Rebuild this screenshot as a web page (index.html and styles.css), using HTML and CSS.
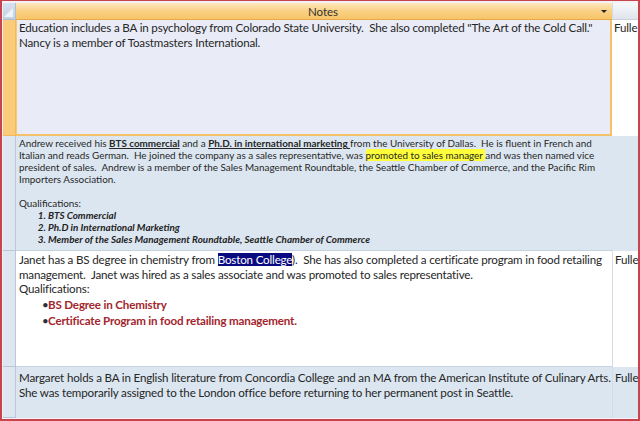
FILE: index.html
```html
<!DOCTYPE html>
<html>
<head>
<meta charset="utf-8">
<link rel="stylesheet" href="styles.css">
</head>
<body>
<div class="frame">
  <div class="sheet">
    <div class="corner">
      <svg width="9" height="9" viewBox="0 0 9 9"><polygon points="9,0 9,9 0,9" fill="#eef3f9"/></svg>
    </div>
    <div class="hnotes"><span class="htitle">Notes</span><span class="arrow"></span></div>
    <div class="hnext"></div>

    <div class="sel sel-on"></div>
    <div class="notes n1 big">Education includes a BA in psychology from Colorado State University.&nbsp; She also completed "The Art of the Cold Call."<br>Nancy is a member of Toastmasters International.</div>
    <div class="next white big">Fulle</div>

    <div class="sel"></div>
    <div class="notes n2 small">
      <div>Andrew received his <b class="u">BTS commercial</b> and a <b class="u">Ph.D. in international marketing </b>from the University of Dallas.&nbsp; He is fluent in French and</div>
      <div>Italian and reads German.&nbsp; He joined the company as a sales representative, was <span class="hl">promoted to sales manager </span>and was then named vice</div>
      <div>president of sales.&nbsp; Andrew is a member of the Sales Management Roundtable, the Seattle Chamber of Commerce, and the Pacific Rim</div>
      <div>Importers Association.</div>
      <div class="gap"></div>
      <div>Qualifications:</div>
      <ol class="olist">
        <li>BTS Commercial</li>
        <li>Ph.D in International Marketing</li>
        <li>Member of the Sales Management Roundtable, Seattle Chamber of Commerce</li>
      </ol>
    </div>
    <div class="next blue"></div>

    <div class="sel"></div>
    <div class="notes n3 big">
      <div>Janet has a BS degree in chemistry from <span class="selx">Boston College</span>).&nbsp; She has also completed a certificate program in food retailing</div>
      <div>management.&nbsp; Janet was hired as a sales associate and was promoted to sales representative.</div>
      <div>Qualifications:</div>
      <ul class="ulist">
        <li>BS Degree in Chemistry</li>
        <li>Certificate Program in food retailing management.</li>
      </ul>
    </div>
    <div class="next white big sep">Fulle</div>

    <div class="sel"></div>
    <div class="notes n4 big">
      <div>Margaret holds a BA in English literature from Concordia College and an MA from the American Institute of Culinary Arts.</div>
      <div>She was temporarily assigned to the London office before returning to her permanent post in Seattle.</div>
    </div>
    <div class="next blue big sep">Fulle</div>
  </div>
</div>
</body>
</html>
```
FILE: styles.css
```css
html, body {
  margin: 0;
  padding: 0;
  background: #ffffff;
}

.frame {
  width: 640px;
  height: 421px;
  box-sizing: border-box;
  border-left: 2px solid #c8434c;
  border-right: 2px solid #c8434c;
  border-top: 1px solid #c8434c;
  border-bottom: 2px solid #c8434c;
  padding: 2px 0 0 1px;
  background: #f3f1f3;
  overflow: hidden;
}

.sheet {
  display: grid;
  grid-template-columns: 13px 596px 26px;
  grid-template-rows: 17px 116px 115px 116px 51px;
  font-family: Lato, "Open Sans", sans-serif;
  color: #262626;
  overflow: hidden;
}

.corner {
  background: linear-gradient(#d9e2ee, #c2d0e2);
  border-right: 1px solid #aebdd2;
  border-bottom: 1px solid #aebdd2;
  box-sizing: border-box;
  display: flex;
  align-items: flex-end;
  justify-content: flex-end;
  padding: 0 2px 2px 0;
}

.hnotes {
  background: linear-gradient(#fde7bd, #f9cf80 55%, #f7c56a);
  border-bottom: 1px solid #e9a842;
  box-sizing: border-box;
  display: flex;
  align-items: center;
  justify-content: center;
  position: relative;
  font-size: 11.5px;
  color: #333333;
}

.htitle {
  margin-left: 18px;
}

.arrow {
  position: absolute;
  right: 5px;
  top: 7px;
  width: 0;
  height: 0;
  border-left: 3px solid transparent;
  border-right: 3px solid transparent;
  border-top: 3px solid #222222;
}

.hnext {
  background: linear-gradient(#f7f8fa, #dfe4eb);
  border-bottom: 1px solid #c9d1dc;
  border-left: 1px solid #d5dbe4;
}

.sel {
  background: #dde6f1;
  border-right: 1px solid #b9c7d9;
  border-bottom: 1px solid #b9c7d9;
  box-sizing: border-box;
}

.sel-on {
  background: #f9cb7a;
  border-right: 1px solid #f3b95a;
  border-bottom: 1px solid #f3b95a;
}

.notes {
  box-sizing: border-box;
  white-space: nowrap;
  overflow: hidden;
  padding-left: 3px;
}

.big {
  font-size: 11.6px;
  letter-spacing: -0.17px;
  line-height: 14.7px;
}

.small {
  font-size: 9.9px;
  line-height: 12px;
}

.n1 {
  background: #e9ecf6;
  border-left: 1px solid #f6c977;
  border-right: 2px solid #f5c06a;
  border-bottom: 2px solid #f5c06a;
  padding-top: 1px;
  padding-left: 2px;
}

.n2 {
  background: #dce6f1;
  border-bottom: 1px solid #c6d2e2;
  padding-top: 1px;
}

.n3 {
  background: #ffffff;
  border-bottom: 1px solid #c6d2e2;
  padding-top: 2px;
}

.n4 {
  background: #dce6f1;
  padding-top: 4px;
}

.next {
  box-sizing: border-box;
  white-space: nowrap;
  overflow: hidden;
  padding-left: 2px;
  padding-top: 2px;
}

.white {
  background: #ffffff;
}

.blue {
  background: #dce6f1;
}

.sep {
  border-left: 1px solid #d3dbe6;
}

.n1 + .next {
  padding-top: 1px;
}

.n4 + .next {
  padding-top: 4px;
}

.u {
  text-decoration: underline;
  font-weight: 700;
}

.hl {
  background: #ffff3a;
}

.selx {
  background: #0a0a80;
  color: #ffffff;
}

.gap {
  height: 12px;
}

.olist {
  margin: 0;
  padding-left: 29px;
  font-weight: 700;
  font-style: italic;
  color: #222222;
}

.ulist {
  margin: 0;
  padding-left: 30px;
  font-weight: 700;
  color: #a3262d;
  list-style: none;
}

.ulist li {
  line-height: 15.5px;
}

.ulist li::before {
  content: "•";
  color: #2e2e2e;
  font-weight: 400;
  display: inline-block;
  width: 6px;
  margin-left: -7px;
}
```
